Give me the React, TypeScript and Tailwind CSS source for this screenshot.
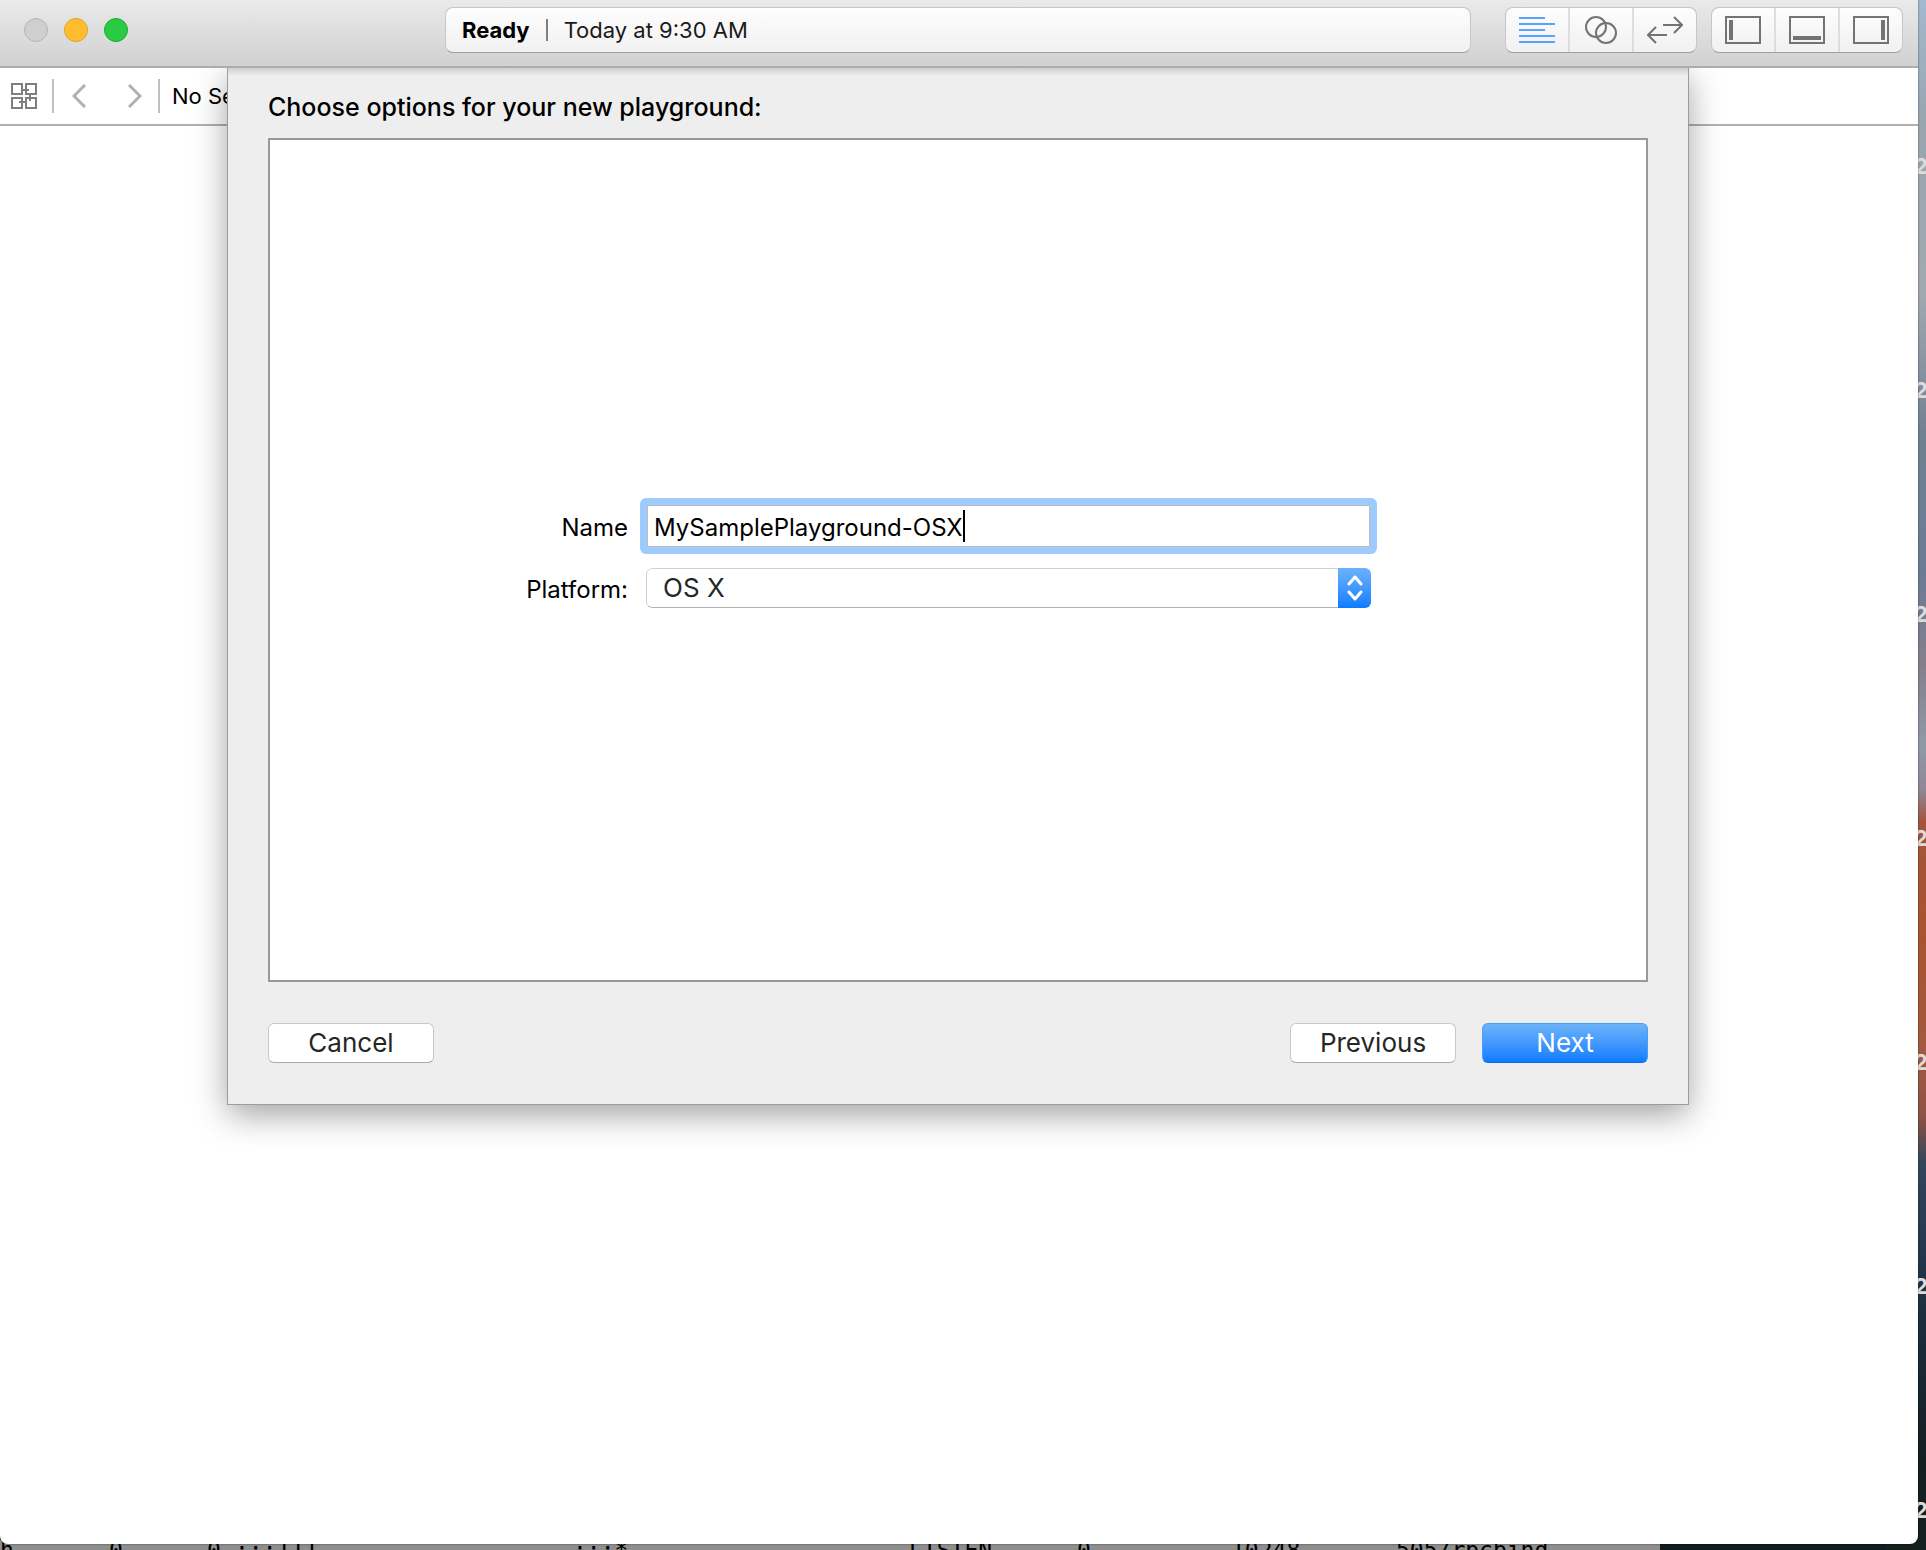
import { useState } from "react";

const PLATFORMS = ["OS X", "iOS"];

const desktopLabels = ["2015", "2015", "2015", "2015", "2015", "2015", "2015"];

const terminalColumns = [
  { text: "h", className: "w-[109px]" },
  { text: "0", className: "w-[98px]" },
  { text: "0", className: "w-[28px]" },
  { text: ":::111", className: "w-[338px]" },
  { text: ":::*", className: "w-[336px]" },
  { text: "LISTEN", className: "w-[168px]" },
  { text: "0", className: "w-[154px]" },
  { text: "10248", className: "w-[165px]" },
  { text: "505/rpcbind", className: "w-[262px]" },
];

function LinesIcon() {
  return (
    <svg width="36" height="26" fill="#5aa2fb" aria-hidden="true">
      <rect width="26" height="2" />
      <rect y="6" width="36" height="2" />
      <rect y="12" width="26" height="2" />
      <rect y="18" width="36" height="2" />
      <rect y="24" width="36" height="2" />
    </svg>
  );
}

function CirclesIcon() {
  return (
    <svg width="32" height="28" fill="none" stroke="#737373" strokeWidth="2" aria-hidden="true">
      <circle cx="11" cy="11" r="10" />
      <circle cx="21" cy="17" r="10" />
    </svg>
  );
}

function ArrowsIcon() {
  return (
    <svg width="36" height="28" fill="none" stroke="#737373" strokeWidth="2" aria-hidden="true">
      <path d="M16 9h19M27 1l8 8-8 8" />
      <path d="M20 19H1M9 11l-8 8 8 8" />
    </svg>
  );
}

function PaneIcon({ side }: { side: "left" | "bottom" | "right" }) {
  return (
    <svg width="36" height="28" aria-hidden="true">
      <rect x="1" y="1" width="34" height="26" fill="none" stroke="#737373" strokeWidth="2" />
      {side === "left" && <rect x="4" y="4" width="4" height="20" fill="#737373" />}
      {side === "bottom" && <rect x="4" y="20" width="28" height="4" fill="#737373" />}
      {side === "right" && <rect x="28" y="4" width="4" height="20" fill="#737373" />}
    </svg>
  );
}

function RelatedItemsIcon() {
  return (
    <svg width="26" height="26" fill="none" stroke="#7f7f7f" strokeWidth="2" aria-hidden="true">
      <rect x="1" y="1" width="10" height="10" />
      <rect x="15" y="1" width="10" height="10" />
      <rect x="1" y="15" width="10" height="10" />
      <rect x="15" y="15" width="10" height="10" />
      <path d="M11 7h7M19 11v7M8 19h7" />
    </svg>
  );
}

function Chevron({ direction }: { direction: "left" | "right" }) {
  return (
    <svg width="14" height="24" fill="none" stroke="#b0b0b0" strokeWidth="3" aria-hidden="true">
      <path d={direction === "left" ? "M13 1L2 12l11 11" : "M1 1l11 11L1 23"} />
    </svg>
  );
}

function Segments({ items }: { items: { label: string; icon: React.ReactNode }[] }) {
  return (
    <div className="flex h-[46px] w-[192px] divide-x-2 divide-[#dedede] overflow-hidden rounded-lg border border-[#c6c6c6] border-b-[#a0a0a0] bg-linear-to-b from-[#fdfdfd] to-[#f1f1f1]">
      {items.map((item) => (
        <button
          key={item.label}
          type="button"
          aria-label={item.label}
          className="flex flex-1 items-center justify-center"
        >
          {item.icon}
        </button>
      ))}
    </div>
  );
}

function TitleBar() {
  return (
    <header className="flex h-[68px] shrink-0 items-start border-b-2 border-[#acacac] bg-linear-to-b from-[#eaeaea] to-[#d1d1d1] pt-[7px] pr-[15px]">
      <div className="flex h-[46px] w-[445px] shrink-0 items-center gap-4 pl-6">
        <button type="button" aria-label="Close" className="size-6 rounded-full border border-[#b5b5b5] bg-[#cfcfcf]" />
        <button type="button" aria-label="Minimize" className="size-6 rounded-full border border-[#e0a032] bg-[#ffbd2e]" />
        <button type="button" aria-label="Zoom" className="size-6 rounded-full border border-[#1faa31] bg-[#28cb41]" />
      </div>
      <div className="flex h-[46px] flex-1 items-center rounded-lg border border-[#c6c6c6] border-b-[#a0a0a0] bg-linear-to-b from-[#fdfdfd] to-[#f1f1f1] pl-4 text-[22px] text-[#1a1a1a]">
        <span className="font-bold text-black">Ready</span>
        <span className="mx-4 h-[22px] w-0.5 bg-[#808080]" />
        <span>Today at 9:30 AM</span>
      </div>
      <div className="ml-[34px] flex gap-[14px]">
        <Segments
          items={[
            { label: "Standard editor", icon: <LinesIcon /> },
            { label: "Assistant editor", icon: <CirclesIcon /> },
            { label: "Version editor", icon: <ArrowsIcon /> },
          ]}
        />
        <Segments
          items={[
            { label: "Navigator", icon: <PaneIcon side="left" /> },
            { label: "Debug area", icon: <PaneIcon side="bottom" /> },
            { label: "Utilities", icon: <PaneIcon side="right" /> },
          ]}
        />
      </div>
    </header>
  );
}

function JumpBar() {
  return (
    <nav className="flex h-[58px] shrink-0 items-center border-b-2 border-[#b0b0b0] pl-[11px] text-[22px] text-black">
      <button type="button" aria-label="Related items">
        <RelatedItemsIcon />
      </button>
      <span className="mr-[18px] ml-[15px] h-[34px] w-0.5 bg-[#c0c0c0]" />
      <button type="button" aria-label="Back">
        <Chevron direction="left" />
      </button>
      <button type="button" aria-label="Forward" className="ml-[42px]">
        <Chevron direction="right" />
      </button>
      <span className="mr-3 ml-4 h-[34px] w-0.5 bg-[#c0c0c0]" />
      <span className="w-[56px] overflow-hidden whitespace-nowrap">No Selection</span>
    </nav>
  );
}

function OptionsSheet() {
  const [name, setName] = useState("MySamplePlayground-OSX");
  const [platform, setPlatform] = useState(PLATFORMS[0]);

  return (
    <form
      onSubmit={(e) => e.preventDefault()}
      className="w-[1460px] bg-[#eeeeee] px-10 pb-[41px] shadow-[0_0_0_1px_#9c9c9c,0_10px_32px_rgba(0,0,0,0.38)]"
    >
      <div className="-mx-10 h-2 bg-linear-to-b from-[#cfcfcf] to-[#eeeeee]" />
      <h1 className="py-[15px] text-[25px] leading-8 font-medium text-black">
        Choose options for your new playground:
      </h1>
      <div className="h-[844px] border-2 border-[#999999] bg-white pt-[358px] pl-[236px]">
        <div className="grid w-[865px] grid-cols-[122px_1fr] items-center gap-x-[18px] gap-y-[14px]">
          <label htmlFor="name" className="pt-1 text-right text-[24px] text-black">
            Name
          </label>
          <div className="-mx-1.5 flex h-14 items-center rounded-md bg-[#9dcbfd] p-[7px]">
            <div className="flex h-full flex-1 items-center border border-[#bcbcbc] bg-white pl-1.5">
              <input
                id="name"
                value={name}
                onChange={(e) => setName(e.target.value)}
                className="field-sizing-content max-w-full pt-1 text-[24px] text-black caret-transparent outline-none"
              />
              <span className="h-8 w-0.5 bg-black" />
            </div>
          </div>
          <label htmlFor="platform" className="pt-1 text-right text-[24px] text-black">
            Platform:
          </label>
          <div className="flex h-10 overflow-hidden rounded-md">
            <select
              id="platform"
              value={platform}
              onChange={(e) => setPlatform(e.target.value)}
              className="flex-1 appearance-none rounded-l-md border border-r-0 border-[#d0d0d0] border-b-[#b4b4b4] bg-white pl-4 text-[26px] leading-8 text-[#262626] outline-none"
            >
              {PLATFORMS.map((p) => (
                <option key={p}>{p}</option>
              ))}
            </select>
            <span className="flex w-[33px] items-center justify-center bg-linear-to-b from-[#6bb3fa] to-[#077cff]">
              <svg width="18" height="26" fill="none" stroke="#fff" strokeWidth="3" strokeLinecap="round" strokeLinejoin="round" aria-hidden="true">
                <path d="M3 9l6-7 6 7M3 17l6 7 6-7" />
              </svg>
            </span>
          </div>
        </div>
      </div>
      <div className="mt-[41px] flex gap-[26px] text-[26px] leading-8 text-[#262626]">
        <button type="button" className="mr-auto h-10 w-[166px] rounded-md border border-[#c8c8c8] border-b-[#ababab] bg-white">
          Cancel
        </button>
        <button type="button" className="h-10 w-[166px] rounded-md border border-[#c8c8c8] border-b-[#ababab] bg-white">
          Previous
        </button>
        <button
          type="submit"
          className="h-10 w-[166px] rounded-md border border-[#4a9df5] border-b-[#0a6cf5] bg-linear-to-b from-[#6bb3fa] to-[#077cff] text-white"
        >
          Next
        </button>
      </div>
    </form>
  );
}

function Desktop() {
  return (
    <div className="absolute inset-0 flex justify-end overflow-hidden bg-[#101c1d]">
      <div className="w-10 bg-[linear-gradient(to_bottom,#a3b9cf_0%,#98a5ae_8%,#a0a9b0_19%,#718092_28%,#6b7b94_37%,#857f8c_43%,#8f99a6_48%,#8f8798_51%,#a3543c_53%,#a9532f_60%,#a25a40_68%,#8e5144_72%,#33465c_75%,#24384f_80%,#1a2938_87%,#131f22_94%,#14211f_100%)] pt-[150px] pl-[28px] text-[22px] leading-8 font-bold text-[#dcdcdc]">
        {desktopLabels.map((label, i) => (
          <div key={i} className="h-[224px]">
            {label}
          </div>
        ))}
      </div>
      <div className="absolute bottom-0 left-0 h-2.5 w-[1660px] overflow-hidden bg-[#8e8e8e]">
        <div className="flex font-['DejaVu_Sans_Mono',monospace] text-[23px] leading-5 whitespace-pre text-black">
          {terminalColumns.map((col, i) => (
            <span key={i} className={col.className}>
              {col.text}
            </span>
          ))}
        </div>
      </div>
    </div>
  );
}

export default function App() {
  return (
    <div className="relative flex min-h-screen overflow-hidden pr-2 pb-1.5 font-[Inter,sans-serif]">
      <Desktop />
      <main className="relative flex flex-1 flex-col overflow-hidden rounded-b-lg bg-white shadow-[0_0_2px_rgba(0,0,0,0.6)]">
        <TitleBar />
        <JumpBar />
        <div className="absolute inset-x-0 top-[68px] bottom-0 flex items-start justify-center overflow-hidden pr-0.5">
          <OptionsSheet />
        </div>
      </main>
    </div>
  );
}
